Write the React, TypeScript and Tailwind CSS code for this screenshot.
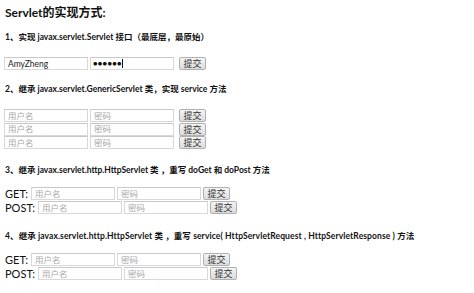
import React from 'react';

const font = { fontFamily: 'Lato, "Noto Sans CJK SC", sans-serif' };

function Field({ placeholder, value }: { placeholder?: string; value?: string }) {
  return (
    <input
      type="text"
      readOnly
      defaultValue={value}
      placeholder={placeholder}
      className="block w-[84px] h-[13px] border border-[#d8d8d8] border-t-[#c8c8c8] bg-white px-[3px] text-[8.5px] leading-none text-[#222] placeholder:text-[#a8a8a8] outline-none"
    />
  );
}

function PasswordField() {
  return (
    <div className="relative w-[84px] h-[13px] border border-[#d8d8d8] border-t-[#c8c8c8] bg-white pl-[2px] flex items-center">
      <span className="text-[7.5px] leading-none tracking-[0.3px] text-[#111]">●●●●●●</span>
      <span className="w-[1px] h-[9px] bg-[#111]" />
    </div>
  );
}

function Submit() {
  return (
    <button className="block w-[27px] h-[13px] border border-[#b0b0b0] rounded-[2px] bg-gradient-to-b from-[#f4f4f4] to-[#dcdcdc] text-[9px] leading-none text-[#333]">
      提交
    </button>
  );
}

function Heading({ children, mt }: { children: React.ReactNode; mt: string }) {
  return <div className={`${mt} pl-[1px] text-[8.5px] leading-[12px] font-bold text-[#111] whitespace-nowrap`}>{children}</div>;
}

function LabeledRow({ label }: { label: string }) {
  return (
    <div className="flex items-center h-[14px]">
      <span className="text-[11px] leading-[14px] text-[#111] mr-[3px]">{label}</span>
      <Field placeholder="用户名" />
      <div className="w-[2px]" />
      <Field placeholder="密码" />
      <div className="w-[2px]" />
      <Submit />
    </div>
  );
}

export default function App() {
  return (
    <div className="w-[474px] h-[293px] bg-white pl-[4px] overflow-hidden leading-none" style={font}>
      <div className="pt-[5px] pl-[1px] text-[12px] leading-[16px] font-bold text-[#111]">Servlet的实现方式:</div>

      <Heading mt="mt-[10px]">1、实现 javax.servlet.Servlet 接口（最底层，最原始）</Heading>
      <div className="mt-[14px] flex items-center gap-[2px]">
        <Field value="AmyZheng" />
        <PasswordField />
        <div className="w-[1px]" />
        <Submit />
      </div>

      <Heading mt="mt-[13px]">2、继承 javax.servlet.GenericServlet 类，实现 service 方法</Heading>
      <div className="mt-[14px] flex flex-col">
        {[0, 1, 2].map((i) => (
          <div key={i} className="flex items-center gap-[2px] h-[13.5px]">
            <Field placeholder="用户名" />
            <Field placeholder="密码" />
            <div className="w-[1px]" />
            <Submit />
          </div>
        ))}
      </div>

      <Heading mt="mt-[14px]">3、继承 javax.servlet.http.HttpServlet 类 ，重写 doGet 和 doPost 方法</Heading>
      <div className="mt-[11px] pl-[1px] flex flex-col">
        <LabeledRow label="GET:" />
        <LabeledRow label="POST:" />
      </div>

      <Heading mt="mt-[15px]">
        <span className="tracking-[0.1px]">4、继承 javax.servlet.http.HttpServlet 类 ，重写 service( HttpServletRequest , HttpServletResponse ) 方法</span>
      </Heading>
      <div className="mt-[11px] pl-[1px] flex flex-col">
        <LabeledRow label="GET:" />
        <LabeledRow label="POST:" />
      </div>
    </div>
  );
}
